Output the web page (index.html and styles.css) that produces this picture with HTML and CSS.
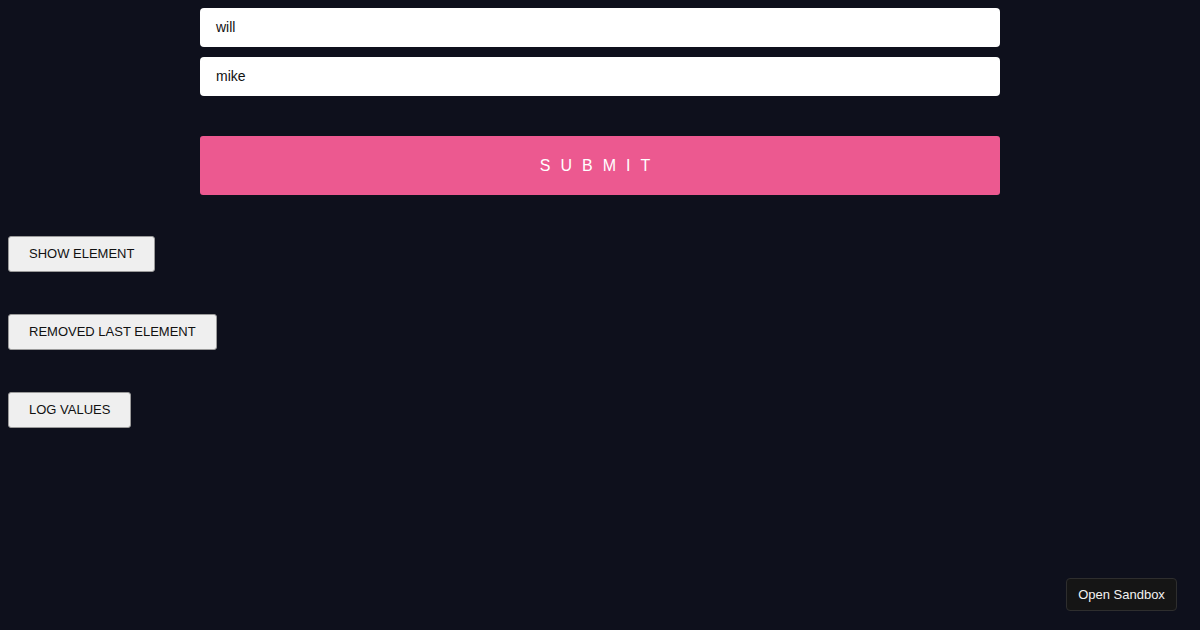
FILE: index.html
```html
<!DOCTYPE html>
<html>
<head>
<meta charset="utf-8">
<link rel="stylesheet" href="styles.css">
</head>
<body>
<div class="page">
  <form class="form">
    <div class="field">will</div>
    <div class="field">mike</div>
    <div class="submit">Submit</div>
  </form>
  <div class="actions">
    <div class="btn">Show element</div>
    <div class="btn">Removed last element</div>
    <div class="btn">Log values</div>
  </div>
</div>
<div class="sandbox">Open Sandbox</div>
</body>
</html>
```
FILE: styles.css
```css
html, body {
  margin: 0;
  background: #0e101c;
  font-family: "Liberation Sans", Arial, sans-serif;
}
.page {
  padding: 8px;
  height: 630px;
  box-sizing: border-box;
}
.form {
  width: 800px;
  margin: 0 auto;
  display: flex;
  flex-direction: column;
  gap: 10px;
}
.field {
  box-sizing: border-box;
  height: 39px;
  background: #fff;
  border-radius: 4px;
  padding: 0 16px 1px;
  font-size: 14px;
  color: #111;
  display: flex;
  align-items: center;
}
.submit {
  margin-top: 30px;
  height: 59px;
  background: #ec5990;
  border-radius: 3px;
  color: #fff;
  text-transform: uppercase;
  font-size: 16px;
  font-weight: 300;
  letter-spacing: 10px;
  display: flex;
  align-items: center;
  justify-content: center;
}
.actions {
  margin-top: 41px;
  display: flex;
  flex-direction: column;
  align-items: flex-start;
  gap: 42px;
}
.btn {
  box-sizing: border-box;
  height: 36px;
  padding: 0 20px 1px;
  background: #efefef;
  border: 1px solid #9a9a9a;
  border-radius: 3px;
  font-size: 13px;
  color: #111;
  text-transform: uppercase;
  display: flex;
  align-items: center;
}
.sandbox {
  position: fixed;
  right: 23px;
  bottom: 19px;
  box-sizing: border-box;
  height: 33px;
  width: 111px;
  background: #151515;
  border: 1px solid #2e2e2e;
  border-radius: 4px;
  color: #f2f2f2;
  font-size: 13px;
  display: flex;
  align-items: center;
  justify-content: center;
}
```
